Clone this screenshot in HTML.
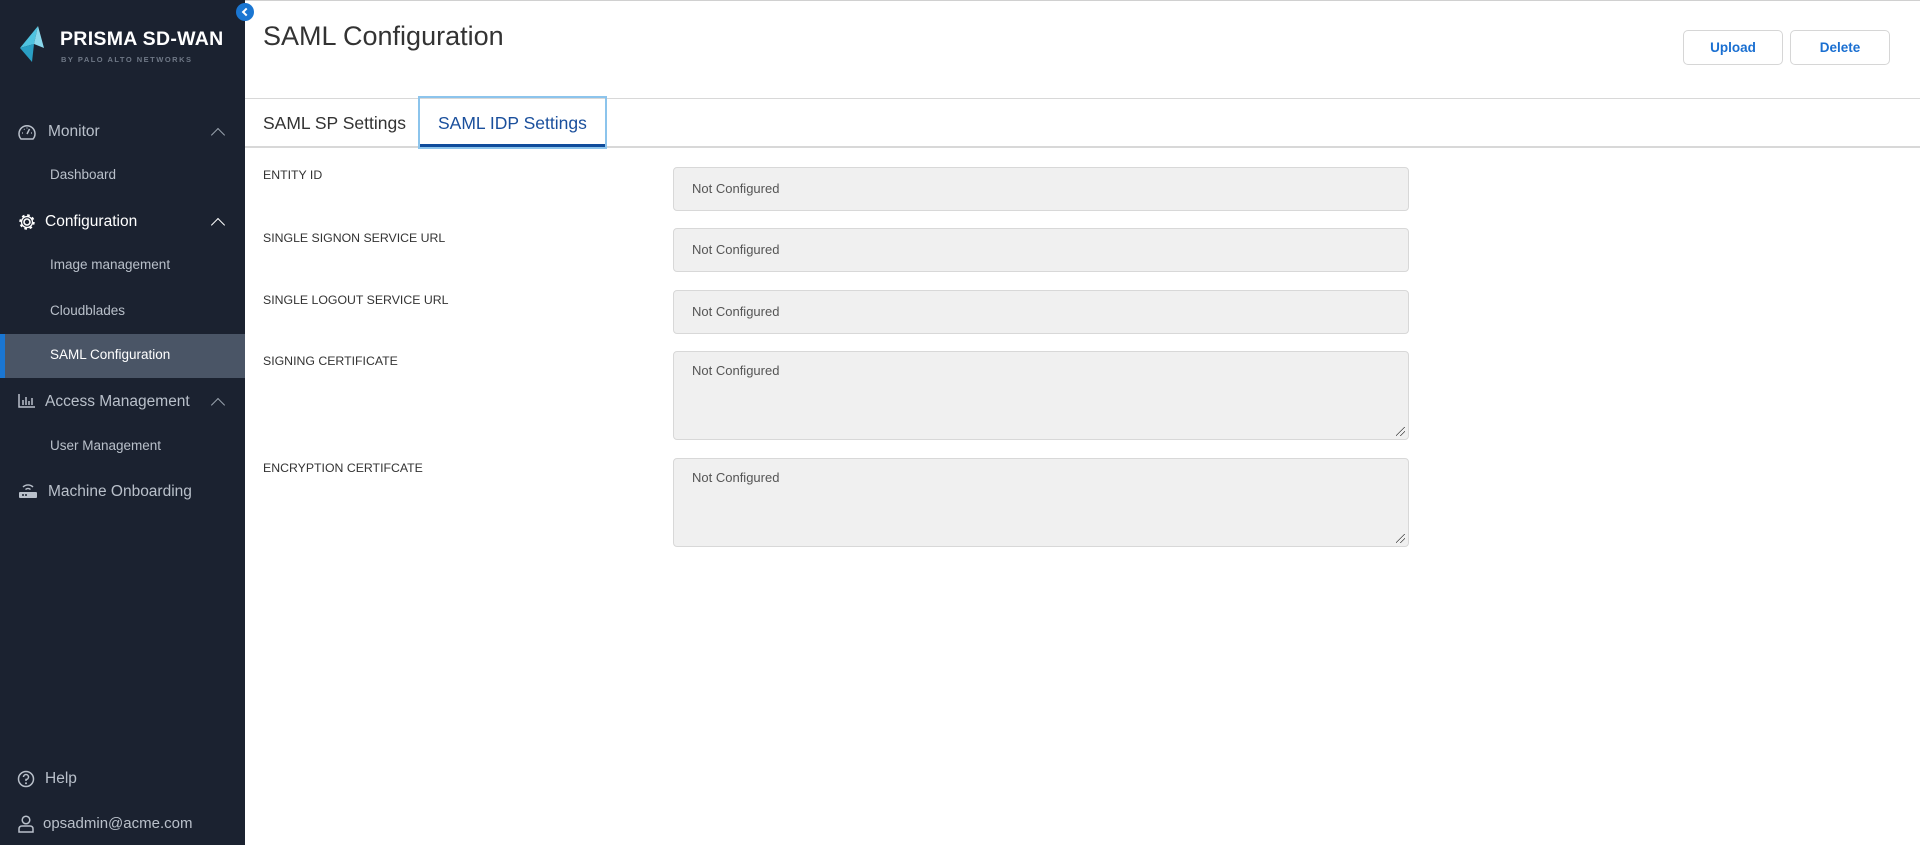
<!DOCTYPE html>
<html><head><meta charset="utf-8"><style>
*{box-sizing:border-box;margin:0;padding:0}
body{width:1920px;height:845px;overflow:hidden;background:#fff;font-family:"Liberation Sans",sans-serif;position:relative}
.sb{position:absolute;left:0;top:0;width:245px;height:845px;background:#1b2230}
.abs{position:absolute;white-space:nowrap}
.nav{color:#b9c0ca;font-size:15.5px}
.sub{color:#b9c0ca;font-size:13.5px;left:50px}
.chev{position:absolute;left:213px;width:10px;height:10px;border-left:1.5px solid #9aa3ae;border-top:1.5px solid #9aa3ae;transform:rotate(45deg)}
.lbl{position:absolute;left:263px;font-size:12.3px;color:#333;}
.inp{position:absolute;left:673px;width:736px;background:#f0f0f0;border:1px solid #d8d8d8;border-radius:4px;font-size:13px;color:#555;padding-left:18px}
.btn{position:absolute;top:30px;width:100px;height:35px;border:1px solid #d6d6d6;border-radius:5px;color:#1a6fd1;font-weight:bold;font-size:13.5px;text-align:center;line-height:33px}
.grip{position:absolute;right:3px;bottom:3px;width:9px;height:9px;background:linear-gradient(135deg,transparent 45%,#444 45%,#444 52%,transparent 52%,transparent 70%,#444 70%,#444 77%,transparent 77%)}
</style></head><body>
<div style="position:absolute;left:0;top:0;width:1920px;height:1px;background:#d0d0d0"></div>
<div class="sb">
<svg class="abs" style="left:18px;top:26px" width="32" height="36" viewBox="0 0 32 36"><polygon points="20,0 2,22 16,18" fill="#4fc3e0"/><polygon points="16,18 2,22 14,36" fill="#2a9fc4"/><polygon points="20,0 16,18 26,22" fill="#8ad8ec"/></svg>
<div class="abs" style="left:60px;top:28px;color:#fff;font-weight:bold;font-size:19.5px;letter-spacing:0.3px">PRISMA SD-WAN</div>
<div class="abs" style="left:61px;top:55px;color:#6f7886;font-weight:bold;font-size:7.5px;letter-spacing:1.5px">BY PALO ALTO NETWORKS</div>
<svg class="abs" style="left:17px;top:123px" width="20" height="18" viewBox="0 0 20 18"><path d="M4 16 A8 8 0 1 1 16 16 Z" fill="none" stroke="#b9c0ca" stroke-width="1.5"/><path d="M10 11 L12.5 6" stroke="#b9c0ca" stroke-width="1.5"/><path d="M5 10h1M14 10h1M7 6l.6.6M10 4.5v1" stroke="#b9c0ca" stroke-width="1.2"/></svg>
<div class="abs nav" style="left:48px;top:123px">Monitor</div><div class="chev" style="top:130px"></div>
<div class="abs sub" style="top:167px">Dashboard</div>
<svg class="abs" style="left:18px;top:213px" width="18" height="18" viewBox="0 0 18 18"><circle cx="9" cy="9" r="3" fill="none" stroke="#fff" stroke-width="1.6"/><circle cx="9" cy="9" r="6.5" fill="none" stroke="#fff" stroke-width="2.5" stroke-dasharray="2.5 2.6"/><circle cx="9" cy="9" r="5.5" fill="none" stroke="#fff" stroke-width="1.3"/></svg>
<div class="abs" style="left:45px;top:213px;color:#fff;font-size:15.5px">Configuration</div><div class="chev" style="top:220px;border-color:#fff"></div>
<div class="abs sub" style="top:257px">Image management</div>
<div class="abs sub" style="top:303px">Cloudblades</div>
<div class="abs" style="left:0;top:334px;width:245px;height:44px;background:#4a5566"></div>
<div class="abs" style="left:0;top:334px;width:5px;height:44px;background:#1a76d2"></div>
<div class="abs" style="left:50px;top:347px;color:#fff;font-size:13.5px">SAML Configuration</div>
<svg class="abs" style="left:18px;top:394px" width="18" height="14" viewBox="0 0 18 14"><path d="M1 0V13H17M5 11V6M8 11V3M11 11V7M14 11V4" stroke="#b9c0ca" stroke-width="1.5" fill="none"/></svg>
<div class="abs nav" style="left:45px;top:393px">Access Management</div><div class="chev" style="top:400px"></div>
<div class="abs sub" style="top:438px">User Management</div>
<svg class="abs" style="left:18px;top:481px" width="20" height="18" viewBox="0 0 20 18"><path d="M5 6A7 7 0 0 1 15 6M7.5 8.5A3.5 3.5 0 0 1 12.5 8.5" stroke="#b9c0ca" stroke-width="1.4" fill="none"/><rect x="1" y="11" width="18" height="6" rx="1" fill="#b9c0ca"/><circle cx="5" cy="14" r="1" fill="#1b2230"/><circle cx="8" cy="14" r="1" fill="#1b2230"/></svg>
<div class="abs nav" style="left:48px;top:483px">Machine Onboarding</div>
<svg class="abs" style="left:17px;top:770px" width="18" height="18" viewBox="0 0 18 18"><circle cx="9" cy="9" r="7.5" fill="none" stroke="#b9c0ca" stroke-width="1.5"/><path d="M6.5 7A2.5 2.5 0 1 1 9 9.5V11" stroke="#b9c0ca" stroke-width="1.5" fill="none"/><circle cx="9" cy="13.3" r="1" fill="#b9c0ca"/></svg>
<div class="abs nav" style="left:45px;top:770px">Help</div>
<svg class="abs" style="left:17px;top:815px" width="18" height="18" viewBox="0 0 18 18"><circle cx="9" cy="5" r="3.8" fill="none" stroke="#b9c0ca" stroke-width="1.5"/><path d="M2 17V14Q2 11 5 11H13Q16 11 16 14V17Z" fill="none" stroke="#b9c0ca" stroke-width="1.5"/></svg>
<div class="abs" style="left:43px;top:815px;color:#b9c0ca;font-size:15px">opsadmin@acme.com</div>
</div>
<div class="abs" style="left:236px;top:3px;width:18px;height:18px;border-radius:50%;background:#1a76d2"></div>
<div class="abs" style="left:243px;top:9px;width:6px;height:6px;border-left:2px solid #fff;border-bottom:2px solid #fff;transform:rotate(45deg)"></div>

<div class="abs" style="left:263px;top:21px;font-size:27px;color:#333">SAML Configuration</div>
<div class="btn" style="left:1683px">Upload</div>
<div class="btn" style="left:1790px">Delete</div>
<div class="abs" style="left:245px;top:98px;width:1675px;height:1px;background:#d8d8d8"></div>
<div class="abs" style="left:245px;top:146px;width:1675px;height:2px;background:#d8d8d8"></div>
<div class="abs" style="left:263px;top:113px;font-size:17.5px;color:#333">SAML SP Settings</div>
<div class="abs" style="left:418px;top:96px;width:189px;height:53px;border:2px solid #8cc4ec"></div>
<div class="abs" style="left:420px;top:144px;width:185px;height:3px;background:#0f4c9c"></div>
<div class="abs" style="left:438px;top:113px;font-size:17.5px;color:#1a4f9c">SAML IDP Settings</div>

<div class="lbl" style="top:168px">ENTITY ID</div>
<div class="inp" style="top:167px;height:44px;line-height:42px">Not Configured</div>
<div class="lbl" style="top:231px">SINGLE SIGNON SERVICE URL</div>
<div class="inp" style="top:228px;height:44px;line-height:42px">Not Configured</div>
<div class="lbl" style="top:293px">SINGLE LOGOUT SERVICE URL</div>
<div class="inp" style="top:290px;height:44px;line-height:42px">Not Configured</div>
<div class="lbl" style="top:354px">SIGNING CERTIFICATE</div>
<div class="inp" style="top:351px;height:89px;padding-top:11px">Not Configured<div class="grip"></div></div>
<div class="lbl" style="top:461px">ENCRYPTION CERTIFCATE</div>
<div class="inp" style="top:458px;height:89px;padding-top:11px">Not Configured<div class="grip"></div></div>
</body></html>
